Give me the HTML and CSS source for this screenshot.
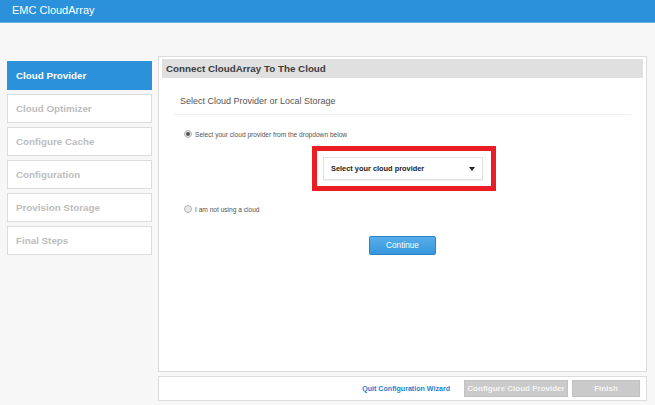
FILE: index.html
```html
<!DOCTYPE html>
<html>
<head>
<meta charset="utf-8">
<link rel="stylesheet" href="styles.css">
</head>
<body>
<header class="topbar">EMC CloudArray</header>
<div class="layout">
  <nav class="steps">
    <div class="step active">Cloud Provider</div>
    <div class="step">Cloud Optimizer</div>
    <div class="step">Configure Cache</div>
    <div class="step">Configuration</div>
    <div class="step">Provision Storage</div>
    <div class="step">Final Steps</div>
  </nav>
  <div class="content">
    <section class="panel">
      <div class="panel-title">Connect CloudArray To The Cloud</div>
      <div class="section">
        <div class="section-title">Select Cloud Provider or Local Storage</div>
        <label class="option"><span class="radio checked"></span>Select your cloud provider from the dropdown below</label>
        <div class="highlight-wrap">
          <div class="highlight">
            <div class="select"><span>Select your cloud provider</span><span class="caret"></span></div>
          </div>
        </div>
        <label class="option second"><span class="radio"></span>I am not using a cloud</label>
        <div class="actions"><button class="btn-primary">Continue</button></div>
      </div>
    </section>
    <footer class="footer">
      <a class="quit">Quit Configuration Wizard</a>
      <button class="btn-disabled wide">Configure Cloud Provider</button>
      <button class="btn-disabled finish">Finish</button>
    </footer>
  </div>
</div>
</body>
</html>
```
FILE: styles.css
```css
html, body {
  margin: 0;
  padding: 0;
  background: #f7f7f7;
  font-family: "Liberation Sans", Arial, sans-serif;
  width: 655px;
  height: 405px;
  overflow: hidden;
}
.topbar {
  height: 22px;
  line-height: 21px;
  background: #2b91da;
  color: #fff;
  font-size: 11px;
  padding-left: 12px;
  border-bottom: 1px solid #6fb4e6;
}
.layout {
  display: flex;
  padding: 33px 8px 0 7px;
  gap: 6px;
}
.steps {
  width: 145px;
  margin-top: 5px;
  display: flex;
  flex-direction: column;
  gap: 4px;
}
.step {
  height: 27px;
  line-height: 27px;
  border: 1px solid #dcdcdc;
  background: #fff;
  color: #bdbdbd;
  font-size: 9.8px;
  font-weight: bold;
  padding-left: 8px;
}
.step.active {
  background: #2b91da;
  border-color: #2b91da;
  color: #fff;
}
.content {
  flex: 1;
  display: flex;
  flex-direction: column;
  gap: 4px;
}
.panel {
  height: 312px;
  border: 1px solid #dcdcdc;
  background: #fff;
  padding: 2px 3px 0 3px;
}
.panel-title {
  height: 19px;
  line-height: 19px;
  background: #e0e0e0;
  color: #3c3c3c;
  font-size: 9.8px;
  font-weight: bold;
  padding-left: 4px;
}
.section {
  margin: 0 12px;
}
.section-title {
  font-size: 9px;
  color: #555;
  padding: 18px 0 8px 6px;
  border-bottom: 1px solid #f0f0f0;
}
.option {
  display: flex;
  align-items: center;
  font-size: 6.6px;
  color: #555;
  margin: 13px 0 0 10px;
  height: 12px;
}
.option.second {
  margin-top: 12px;
}
.radio {
  width: 6px;
  height: 6px;
  border-radius: 50%;
  border: 1px solid #b5b5b5;
  background: #e8e8e8;
  margin-right: 3px;
  position: relative;
}
.radio.checked::after {
  content: "";
  position: absolute;
  left: 1px;
  top: 1px;
  width: 4px;
  height: 4px;
  border-radius: 50%;
  background: #555;
}
.highlight-wrap {
  display: flex;
  justify-content: center;
  margin-top: 6px;
  padding-left: 3px;
}
.highlight {
  width: 160px;
  border: 5px solid #ea1c24;
  padding: 6px 8px 6px 6px;
}
.select {
  height: 21px;
  border: 1px solid #e2e2e2;
  box-shadow: 0 1px 1px rgba(0,0,0,0.05);
  display: flex;
  align-items: center;
  justify-content: space-between;
  padding: 0 7px;
  font-size: 7.4px;
  font-weight: bold;
  color: #222;
}
.caret {
  width: 0;
  height: 0;
  border-left: 3.5px solid transparent;
  border-right: 3.5px solid transparent;
  border-top: 4px solid #222;
}
.actions {
  display: flex;
  justify-content: center;
  margin-top: 21px;
}
.btn-primary {
  width: 67px;
  height: 19px;
  border: 1px solid #2a82c4;
  border-radius: 2px;
  background: linear-gradient(#57aeea, #3697dc);
  color: #fff;
  font-family: "Liberation Sans", Arial, sans-serif;
  font-size: 8.2px;
  padding: 0;
}
.footer {
  height: 23px;
  border: 1px solid #dcdcdc;
  background: #fff;
  display: flex;
  align-items: center;
  justify-content: flex-end;
  padding-right: 6px;
}
.quit {
  color: #2b7fd0;
  font-size: 7.1px;
  font-weight: bold;
  margin-right: 14px;
}
.btn-disabled {
  height: 17px;
  background: #cacaca;
  border: 1px solid #c2c2c2;
  color: #f4f4f4;
  font-family: "Liberation Sans", Arial, sans-serif;
  font-size: 8px;
  font-weight: bold;
  padding: 0;
  white-space: nowrap;
}
.btn-disabled.wide {
  width: 104px;
  margin-right: 4px;
}
.btn-disabled.finish {
  width: 68px;
}
```
